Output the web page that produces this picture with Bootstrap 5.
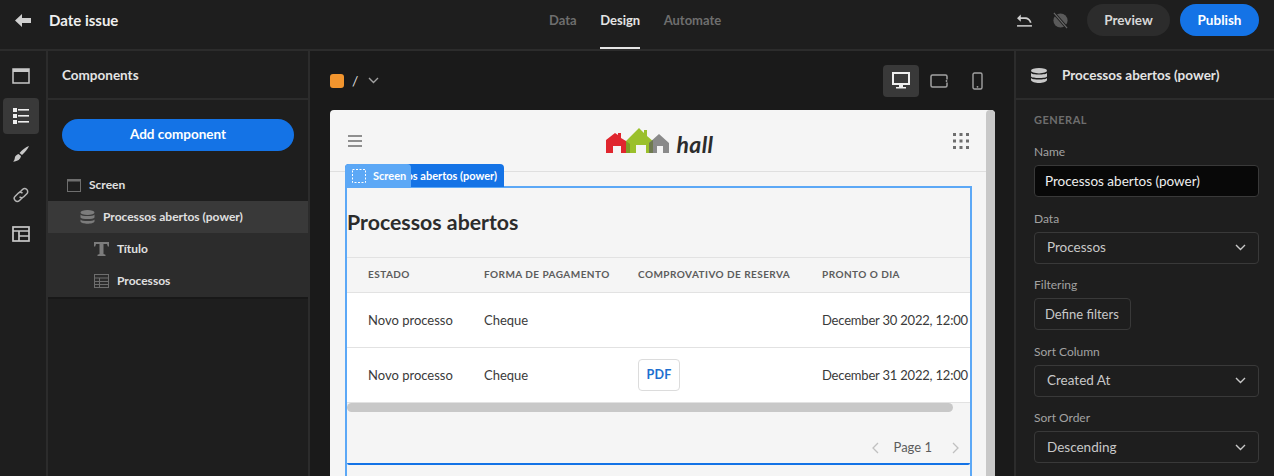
<!doctype html>
<html lang="en"><head><meta charset="utf-8"><title>Date issue</title>
<link rel="stylesheet" href="https://cdn.jsdelivr.net/npm/bootstrap@5.3.0/dist/css/bootstrap.min.css">
<style>
html,body{height:100%;overflow:hidden}
body{background:#1a1a1a;color:#efefef;font-family:"Lato","Liberation Sans",sans-serif;font-size:14px}
.shell{height:476px;display:flex;flex-direction:column;overflow:hidden}
.topbar{height:51px;flex:none;background:#1e1e1e;border-bottom:2px solid #2c2c2c;padding:0 15px 9px 15px}
.app-title{font-size:15px;font-weight:700;margin-left:18px;color:#efefef}
.tabs{position:absolute;left:549px;top:0;height:49px;gap:23.5px}
.tabs span{display:flex;align-items:center;height:49px;font-size:13px;font-weight:700;color:#6e6e6e;padding-bottom:8px}
.tabs span.on{color:#e4e4e4;border-bottom:2px solid #e4e4e4;padding-bottom:6px}
.pill{height:32px;border-radius:16px;border:0;font-weight:700;font-size:13.5px;color:#fff;padding:0}
.pill-dark{background:#2c2c2c;width:83px;color:#d8d8d8;margin-left:18px}
.pill-blue{background:#1473e6;width:79px;margin-left:10px}
.undo-ic{margin-right:19px}
.body-row{flex:1;display:flex;min-height:0}
.rail{width:48px;flex:none;background:#1e1e1e;border-right:2px solid #2c2c2c;padding:7px 3px;gap:3.5px;display:flex;flex-direction:column}
.rail-btn{width:36px;height:36px;border-radius:4px;display:flex;align-items:center;justify-content:center;flex:none}
.rail-btn.on{background:#393939}
.comp-panel{width:262px;flex:none;background:#1e1e1e;border-right:2px solid #2c2c2c}
.panel-head{height:49px;border-bottom:2px solid #2c2c2c;font-weight:700;font-size:13.5px;color:#e4e4e4;padding-top:1px}
.comp-panel .panel-head{padding-left:14px}
.add-btn{display:block;width:232px;height:32px;margin:19px 0 18px 14px;background:#1473e6;color:#fff;border:0;border-radius:16px;font-weight:700;font-size:13.5px;padding:0 0 2px}
.tree-row{height:32px;display:flex;align-items:center;font-size:12px;font-weight:700;color:#e0e0e0}
.tree-row svg{flex:none}
.t0{padding-left:19px;gap:8px}
.t1{padding-left:32px;background:#393939;gap:8px}
.t2{padding-left:46px;background:#2c2c2c;gap:8px}
.tree-foot{height:2px;background:#181818}
.canvas{flex:1;min-width:0;background:#1a1a1a;padding:0 19px 0 20px}
.cv-tools{height:59px;flex:none;color:#ddd}
.dot-orange{width:14px;height:14px;border-radius:3px;background:#f2952e}
.chev-gap{margin-left:10px}
.dev{width:36px;height:32px;border-radius:4px;display:flex;align-items:center;justify-content:center;margin-left:2px}
.dev.on{background:#393939}
.preview{background:#f5f5f5;border-radius:4px 4px 0 0;height:420px;display:flex;color:#2c2c2c;overflow:hidden}
.pv-main{flex:1;min-width:0}
.pv-scroll{width:9px;background:#c8c8c8;flex:none;border-radius:4px 4px 0 0}
.pv-nav{height:62px;border-bottom:1px solid #dfdfdf;padding:0 17px 0 18px}
.logo-box{margin-left:4px}
.logo-txt{font-style:italic;font-weight:700;font-size:23px;color:#2c2c2c;line-height:1;margin-left:3px;margin-bottom:-2px;letter-spacing:.4px}
.selbox{margin:14px 14px 0 15px;border:2px solid #5ca8f6;border-bottom:0;height:300px;position:relative}
.selin{height:277px;border-bottom:2px solid #1473e6;overflow:hidden;border-radius:0 0 2px 2px}
.pv-h{font-size:21.3px;font-weight:700;color:#2c2c2c;height:69px;display:flex;align-items:flex-end;padding-bottom:24px;margin:0;line-height:1}
.tbl-wrap{overflow:hidden;width:623px}
.tbl{table-layout:fixed;width:800px;margin:0;border-top:1px solid #e2e2e2}
.tbl th{height:35px;background:#f5f5f5;color:#5c5c5c;font-size:10px;font-weight:700;letter-spacing:.45px;text-transform:uppercase;padding:0 0 2px 20px;vertical-align:middle;border-bottom:1px solid #e2e2e2;white-space:nowrap}
.tbl td{height:55px;background:#fff;color:#3a3a3a;font-size:13px;padding:2px 0 0 20px;vertical-align:middle;border-bottom:1px solid #e2e2e2;white-space:nowrap}
.tbl td.when{letter-spacing:-.2px}
.tbl td.chipcell{padding-top:0}
.tbl th:first-child,.tbl td:first-child{padding-left:21px}
.pdf-chip{display:inline-flex;width:42px;height:32px;align-items:center;justify-content:center;border:1px solid #dcdcdc;border-radius:4px;color:#1d6fd0;font-weight:700;font-size:12.5px;letter-spacing:.2px}
.h-scroll{height:9px;width:606px;background:#c8c8c8;border-radius:5px;margin-top:0}
.pager{height:52px;padding-right:10px;gap:15px;color:#5c5c5c;font-size:13px;padding-top:20px}
.pager-next{margin-left:5px}
.seltag{position:absolute;left:-2px;top:-24px;height:23px;width:159px;background:#1473e6;color:#fff;font-size:11px;font-weight:700;border-radius:4px 4px 0 0;white-space:nowrap;overflow:hidden;display:flex;align-items:center;justify-content:flex-end;padding:1px 7px 0 0}
.seltag2{position:absolute;left:-2px;top:-24px;height:23px;width:66px;background:#5ca8f6;color:#fff;font-size:11px;font-weight:700;border-radius:4px 4px 0 0;display:flex;align-items:center;padding:1px 0 0 7px;gap:7px}
.prop-panel{width:260px;flex:none;background:#1e1e1e;border-left:2px solid #2c2c2c}
.prop-panel .panel-head{padding-left:15px;gap:15px;font-size:13.5px}
.prop-body{padding:13px 15px 0 18px}
.sec-title{font-size:11px;font-weight:700;letter-spacing:.5px;color:#6e6e6e;margin-bottom:18px;line-height:14px}
.fld{height:66.5px}
.fld-label{font-size:12px;line-height:14px;color:#a2a2a2;height:14px;margin-bottom:6px}
.ctl{height:32px;border:1px solid #393939;border-radius:4px;display:flex;align-items:center;justify-content:space-between;padding:0 12px;color:#c8c8c8;font-size:13.5px;background:#1e1e1e;white-space:nowrap}
.ctl-in{background:#080808;color:#efefef;padding:0 10px}
.ctl-btn{display:inline-flex;width:97px;padding:1px 10px 0;font-size:13px}
</style></head><body>
<div class="shell">
 <div class="topbar d-flex align-items-center position-relative">
  <svg width="16" height="13" viewBox="0 0 16 13"><path d="M7 0v4h9v5H7v4L0 6.500z" fill="#d0d0d0"/></svg>
  <span class="app-title">Date issue</span>
  <div class="tabs d-flex"><span>Data</span><span class="on">Design</span><span>Automate</span></div>
  <div class="ms-auto d-flex align-items-center">
   <svg width="17" height="14" viewBox="0 0 18 15" class="undo-ic"><path d="M1 13.800h16" stroke="#d0d0d0" stroke-width="1.600"/><path d="M16.500 10.500C15.800 6 12 4 8.500 4.500H5V1.500L1 5.500l4 4V6.500h3.500c3-.3 5.500 1 6.200 4z" fill="#d0d0d0"/></svg>
   <svg width="17" height="17" viewBox="0 0 18 18"><circle cx="9" cy="9" r="7.500" fill="#5a5a5a"/><path d="M2 1l14 16" stroke="#1e1e1e" stroke-width="3"/><path d="M2 1l14 16" stroke="#6a6a6a" stroke-width="1.200"/></svg>
   <button class="pill pill-dark">Preview</button>
   <button class="pill pill-blue">Publish</button>
  </div>
 </div>
 <div class="body-row">
  <div class="rail">
   <div class="rail-btn"><svg width="18" height="16" viewBox="0 0 18 16"><rect x="1" y="1" width="16" height="14" fill="none" stroke="#c8c8c8" stroke-width="1.500"/><rect x="1" y="1" width="16" height="3" fill="#c8c8c8"/></svg></div>
   <div class="rail-btn on"><svg width="18" height="16" viewBox="0 0 18 16" fill="#efefef"><rect x="1" y="0" width="4" height="4"/><rect x="1" y="6" width="4" height="4"/><rect x="1" y="12" width="4" height="4"/><rect x="6" y="1" width="11" height="1.600"/><rect x="6" y="7" width="11" height="1.600"/><rect x="6" y="13" width="11" height="1.600"/></svg></div>
   <div class="rail-btn"><svg width="18" height="18" viewBox="0 0 18 18"><path d="M17 0c-1 3-4.500 6.500-7 9l-2.500-2C10 4 14 1 17 0z" fill="#c8c8c8"/><path d="M6.500 8l2.500 2c-.5 3-3 5.500-8 5.500 2-1.500 1.500-3 2-4.500.5-1.500 2-2.500 3.500-3z" fill="#c8c8c8"/></svg></div>
   <div class="rail-btn"><svg width="18" height="18" viewBox="0 0 18 18" fill="none" stroke="#b4b4b4" stroke-width="1.500"><path d="M7.500 6.500l3-3a3 3 0 0 1 4.300 4.300l-3 3a3 3 0 0 1-4.300 0"/><path d="M10.500 11.500l-3 3a3 3 0 0 1-4.300-4.300l3-3a3 3 0 0 1 4.300 0"/></svg></div>
   <div class="rail-btn"><svg width="18" height="16" viewBox="0 0 18 16" fill="none" stroke="#c8c8c8" stroke-width="1.700"><rect x="1" y="1" width="16" height="14"/><path d="M1 5h16M7 5v10M7 10h10"/></svg></div>
  </div>
  <div class="comp-panel">
   <div class="panel-head d-flex align-items-center">Components</div>
   <button class="add-btn">Add component</button>
   <div class="tree-row t0"><svg width="14" height="13" viewBox="0 0 14 13"><rect x=".5" y=".5" width="13" height="12" fill="none" stroke="#6e6e6e"/><rect x=".5" y=".5" width="13" height="2" fill="#6e6e6e"/></svg><span>Screen</span></div>
   <div class="tree-row t1"><svg width="15" height="14" viewBox="0 0 15 14" fill="#7c7c7c"><ellipse cx="7.500" cy="2.500" rx="7" ry="2.500"/><path d="M.5 4.500c1 2 13 2 14 0v3c-1 2-13 2-14 0zM.5 9.500c1 2 13 2 14 0v2c-1 3-13 3-14 0z"/></svg><span>Processos abertos (power)</span></div>
   <div class="tree-row t2"><svg width="15" height="14" viewBox="0 0 15 14" fill="#7c7c7c"><path d="M0 0h15v4.500h-1.200L13 2H9.500v10l2 .8V14h-8v-1.200l2-.8V2H2l-.8 2.500H0z"/></svg><span>Título</span></div>
   <div class="tree-row t2"><svg width="15" height="14" viewBox="0 0 15 14" fill="none" stroke="#6e6e6e"><rect x=".5" y=".5" width="14" height="13"/><path d="M.5 4h14M.5 7.500h14M.5 10.500h14M5.500 4v9.500"/></svg><span>Processos</span></div>
   <div class="tree-foot"></div>
  </div>
  <div class="canvas d-flex flex-column">
   <div class="cv-tools d-flex align-items-center">
    <span class="dot-orange"></span><span class="ms-2">/</span>
    <svg width="11" height="7" viewBox="0 0 11 7" class="chev-gap"><path d="M1 1l4.500 4.500L10 1" fill="none" stroke="#a2a2a2" stroke-width="1.400"/></svg>
    <div class="ms-auto d-flex align-items-center">
     <div class="dev on"><svg width="18" height="17" viewBox="0 0 18 17"><rect x="1" y="1" width="16" height="11" fill="none" stroke="#efefef" stroke-width="2"/><path d="M7 12.500h4V15h3v1.500H4V15h3z" fill="#efefef"/></svg></div>
     <div class="dev"><svg width="18" height="14" viewBox="0 0 18 14"><rect x="1" y="1" width="16" height="12" rx="1.500" fill="none" stroke="#a2a2a2" stroke-width="1.500"/><rect x="15" y="5.500" width="3" height="3" fill="#1a1a1a"/><circle cx="16.500" cy="7" r=".9" fill="#a2a2a2"/></svg></div>
     <div class="dev"><svg width="11" height="18" viewBox="0 0 11 18"><rect x="1" y="1" width="9" height="16" rx="1.500" fill="none" stroke="#a2a2a2" stroke-width="1.400"/><circle cx="5.500" cy="14.800" r=".9" fill="#a2a2a2"/></svg></div>
    </div>
   </div>
   <div class="preview">
    <div class="pv-main">
     <div class="pv-nav d-flex align-items-center justify-content-between">
      <svg width="14" height="12" viewBox="0 0 14 12"><path d="M0 1h14M0 6h14M0 11h14" stroke="#6e6e6e" stroke-width="1.500"/></svg>
      <div class="d-flex align-items-end logo-box">
       <svg width="68" height="27" viewBox="0 0 68 27"><path d="M0 26V13L9 6l3 2V6h3v5l5 3v12h-5v-7H7v7z" fill="#e0262e"/><path d="M20 14L33 1l5 5V3h3v6l7 6-1 2v9h-7v-8h-10v8h-9V17z" fill="#9bc02c"/><path d="M20 14l4 3v9h-4z" fill="#7f9e25"/><path d="M43 16L53 7l10 9v10h-6v-7h-6v7h-7V17z" fill="#8a8a8a"/><path d="M43 16l4-3v13h-4z" fill="#6f7a50"/></svg>
       <span class="logo-txt">hall</span>
      </div>
      <svg width="16" height="16" viewBox="0 0 16 16" fill="#6e6e6e"><rect x="0" y="0" width="3" height="3"/><rect x="6.500" y="0" width="3" height="3"/><rect x="13" y="0" width="3" height="3"/><rect x="0" y="6.500" width="3" height="3"/><rect x="6.500" y="6.500" width="3" height="3"/><rect x="13" y="6.500" width="3" height="3"/><rect x="0" y="13" width="3" height="3"/><rect x="6.500" y="13" width="3" height="3"/><rect x="13" y="13" width="3" height="3"/></svg>
     </div>
     <div class="selbox">
      <div class="seltag">os abertos (power)</div>
      <div class="seltag2"><svg width="14" height="14" viewBox="0 0 14 14"><rect x=".5" y=".5" width="13" height="13" fill="none" stroke="#fff" stroke-dasharray="2 1.500"/></svg><span>Screen</span></div>
      <div class="selin">
       <h1 class="pv-h">Processos abertos</h1>
       <div class="tbl-wrap">
        <table class="table tbl">
         <colgroup><col style="width:117px"><col style="width:154px"><col style="width:184px"><col style="width:345px"></colgroup>
         <thead><tr><th>Estado</th><th>Forma de pagamento</th><th>Comprovativo de reserva</th><th>Pronto o dia</th></tr></thead>
         <tbody>
          <tr><td>Novo processo</td><td>Cheque</td><td></td><td class="when">December 30 2022, 12:00 AM</td></tr>
          <tr><td>Novo processo</td><td>Cheque</td><td class="chipcell"><span class="pdf-chip">PDF</span></td><td class="when">December 31 2022, 12:00 AM</td></tr>
         </tbody>
        </table>
       </div>
       <div class="h-scroll"></div>
       <div class="pager d-flex align-items-center justify-content-end">
        <svg width="8" height="12" viewBox="0 0 8 12"><path d="M7 1L2 6l5 5" fill="none" stroke="#c0c0c0" stroke-width="1.300"/></svg>
        <span>Page 1</span>
        <svg width="8" height="12" viewBox="0 0 8 12" class="pager-next"><path d="M1 1l5 5-5 5" fill="none" stroke="#c0c0c0" stroke-width="1.300"/></svg>
       </div>
      </div>
     </div>
    </div>
    <div class="pv-scroll"></div>
   </div>
  </div>
  <div class="prop-panel">
   <div class="panel-head d-flex align-items-center">
    <svg width="16" height="15" viewBox="0 0 16 15" fill="#c8c8c8"><ellipse cx="8" cy="2.700" rx="8" ry="2.700"/><path d="M0 5c1 2 15 2 16 0v3.500c-1 2-15 2-16 0zM0 10c1 2 15 2 16 0v2c-1 4-15 4-16 0z"/></svg>
    <span>Processos abertos (power)</span>
   </div>
   <div class="prop-body">
    <div class="sec-title">GENERAL</div>
    <div class="fld"><div class="fld-label">Name</div><div class="ctl ctl-in">Processos abertos (power)</div></div>
    <div class="fld"><div class="fld-label">Data</div><div class="ctl"><span>Processos</span><svg width="11" height="7" viewBox="0 0 11 7"><path d="M1 1l4.500 4.500L10 1" fill="none" stroke="#c8c8c8" stroke-width="1.400"/></svg></div></div>
    <div class="fld"><div class="fld-label">Filtering</div><div class="ctl ctl-btn">Define filters</div></div>
    <div class="fld"><div class="fld-label">Sort Column</div><div class="ctl"><span>Created At</span><svg width="11" height="7" viewBox="0 0 11 7"><path d="M1 1l4.500 4.500L10 1" fill="none" stroke="#c8c8c8" stroke-width="1.400"/></svg></div></div>
    <div class="fld"><div class="fld-label">Sort Order</div><div class="ctl"><span>Descending</span><svg width="11" height="7" viewBox="0 0 11 7"><path d="M1 1l4.500 4.500L10 1" fill="none" stroke="#c8c8c8" stroke-width="1.400"/></svg></div></div>
   </div>
  </div>
 </div>
</div>
<script src="https://cdn.jsdelivr.net/npm/bootstrap@5.3.0/dist/js/bootstrap.bundle.min.js"></script>
</body></html>
